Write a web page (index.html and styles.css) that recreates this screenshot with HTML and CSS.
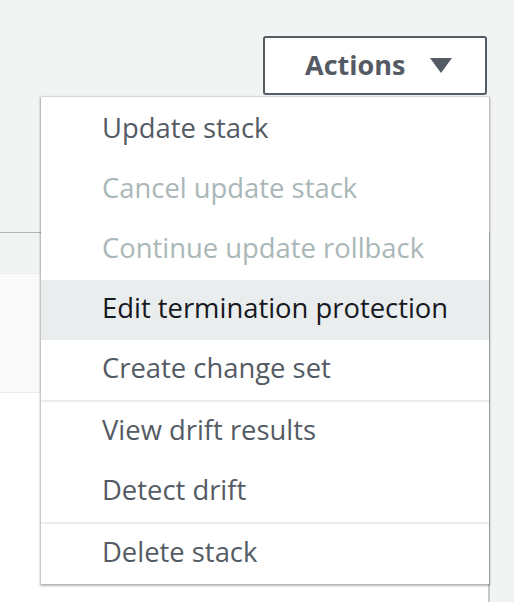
FILE: index.html
```html
<!DOCTYPE html>
<html>
<head>
<meta charset="utf-8">
<link rel="stylesheet" href="styles.css">
</head>
<body>
<div class="page">
  <div class="header">
    <div class="actions-wrap">
      <button class="actions-btn">
        <span class="actions-label">Actions</span>
        <svg class="caret" width="22" height="15" viewBox="0 0 22 15"><polygon points="0,0 22,0 11,15" fill="#545b64"/></svg>
      </button>
      <div class="menu">
        <div class="group">
          <div class="item">Update stack</div>
          <div class="item disabled">Cancel update stack</div>
          <div class="item disabled">Continue update rollback</div>
          <div class="item active">Edit termination protection</div>
          <div class="item">Create change set</div>
        </div>
        <div class="group">
          <div class="item">View drift results</div>
          <div class="item">Detect drift</div>
        </div>
        <div class="group">
          <div class="item">Delete stack</div>
        </div>
      </div>
    </div>
  </div>
  <div class="panel">
    <div class="panel-head"></div>
    <div class="panel-row"></div>
    <div class="panel-rest"></div>
  </div>
</div>
</body>
</html>
```
FILE: styles.css
```css
html, body {
  margin: 0;
  padding: 0;
}
body {
  background: #f2f3f3;
  font-family: "Open Sans", "Noto Sans", sans-serif;
  width: 514px;
  height: 602px;
  overflow: hidden;
}
.page {
  display: flex;
  flex-direction: column;
  height: 602px;
}
.header {
  height: 232px;
  display: flex;
  justify-content: flex-end;
  align-items: flex-start;
  padding-right: 27px;
  box-sizing: border-box;
}
.actions-wrap {
  position: relative;
  margin-top: 36px;
}
.actions-btn {
  width: 224px;
  height: 59px;
  box-sizing: border-box;
  border: 2px solid #545b64;
  border-radius: 3px;
  background: #fff;
  display: flex;
  align-items: center;
  justify-content: flex-start;
  padding: 0 0 3px 40px;
  font-family: inherit;
  font-weight: 700;
  font-size: 27px;
  color: #545b64;
  gap: 25px;
}
.caret {
  display: block;
  margin-top: 2px;
}
.menu {
  position: absolute;
  top: 61px;
  right: -2px;
  width: 448px;
  background: #fff;
  padding-top: 3px;
  box-shadow: 0 1px 2px 1px rgba(0,0,0,0.28), 0 0 1px rgba(0,0,0,0.2);
  z-index: 2;
}
.group + .group {
  border-top: 2px solid #eaeded;
}
.item {
  height: 60px;
  box-sizing: border-box;
  display: flex;
  align-items: center;
  padding-left: 61px;
  padding-bottom: 5px;
  font-size: 27.4px;
  color: #545b64;
}
.item.disabled {
  color: #aab7b8;
}
.item.active {
  background: #eaeded;
  color: #16191f;
}
.panel {
  flex: 1;
  width: 490px;
  border-top: 1px solid #aab7b8;
  border-right: 2px solid #c6caca;
  box-sizing: border-box;
  display: flex;
  flex-direction: column;
}
.panel-head {
  height: 40px;
  background: #f2f3f3;
  border-bottom: 1px solid #eaeded;
}
.panel-row {
  height: 118px;
  background: #fafafa;
  border-bottom: 1px solid #eaeded;
}
.panel-rest {
  flex: 1;
  background: #fff;
}
```
